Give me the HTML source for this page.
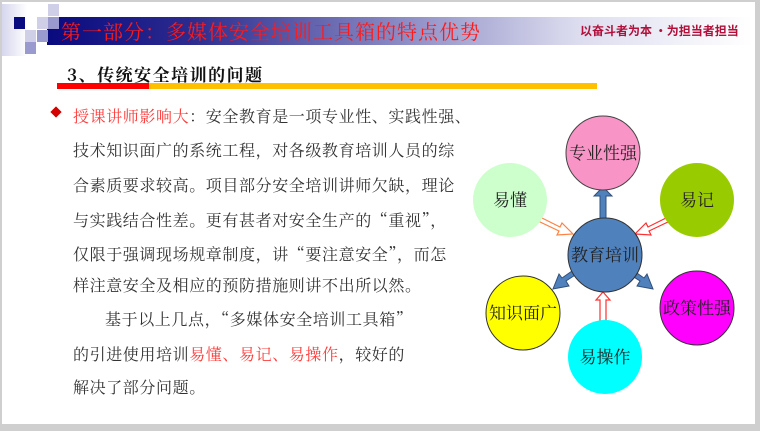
<!DOCTYPE html>
<html><head><meta charset="utf-8"><style>
*{margin:0;padding:0}
body{width:760px;height:431px;background:#cfcfcf;position:relative;overflow:hidden;font-family:"Noto Serif CJK SC","Liberation Serif",serif}
#slide{position:absolute;left:2px;top:2px;width:753px;height:422px;background:#fff;overflow:hidden}
.a{position:absolute}
.sq{position:absolute;width:11px;height:12px}
.body{position:absolute;left:71px;font-size:16px;line-height:20px;color:#333;white-space:nowrap;letter-spacing:0.6px}
.red{color:#ff3b3b}
</style></head><body>
<div id="slide">
<div class="a" style="left:0;top:2px;width:25px;height:52px;background:linear-gradient(90deg,#d6d6ee,#fff)"></div>
<div class="a" style="left:45px;top:15px;width:705px;height:28px;background:linear-gradient(90deg,#0a0a80 0%,#2a2a8e 20%,#8a8ac4 50%,#dcdcef 75%,#fff 100%)"></div>
<div class="sq" style="left:12px;top:15px;background:#0a0a80"></div>
<div class="sq" style="left:46px;top:2px;background:#cfcfe8"></div>
<div class="sq" style="left:35px;top:15px;background:#cfcfe8"></div>
<div class="sq" style="left:46px;top:15px;background:#9a9acf"></div>
<div class="sq" style="left:23px;top:28px;background:#cfcfe8"></div>
<div class="sq" style="left:35px;top:28px;background:#9a9acf"></div>
<div class="sq" style="left:23px;top:40px;background:#9a9acf"></div>
<div class="a" style="left:59px;top:16px;font-size:20px;line-height:26px;letter-spacing:1px;color:#ff1a1a;white-space:nowrap">第一部分：多媒体安全培训工具箱的特点优势</div>
<div class="a" style="left:578px;top:21px;font-size:12px;line-height:16px;font-weight:bold;color:#b0103a;font-family:'Noto Sans CJK SC','Liberation Sans',sans-serif;white-space:nowrap">以奋斗者为本 •为担当者担当</div>
<div class="a" style="left:65px;top:61px;font-size:17px;line-height:22px;letter-spacing:1.5px;font-weight:bold;color:#111;white-space:nowrap">3、传统安全培训的问题</div>
<div class="a" style="left:55px;top:81px;width:92px;height:6px;background:#ff0000"></div>
<div class="a" style="left:147px;top:81px;width:448px;height:6px;background:#ffc000"></div>
<div class="a" style="left:50px;top:106px;width:8px;height:8px;background:#d40000;transform:rotate(45deg)"></div>
<div class="body" style="top:104px"><span class="red">授课讲师影响大</span>：安全教育是一项专业性、实践性强、</div>
<div class="body" style="top:138px">技术知识面广的系统工程，对各级教育培训人员的综</div>
<div class="body" style="top:173px">合素质要求较高。项目部分安全培训讲师欠缺，理论</div>
<div class="body" style="top:208px">与实践结合性差。更有甚者对安全生产的“重视”，</div>
<div class="body" style="top:242px">仅限于强调现场规章制度，讲“要注意安全”，而怎</div>
<div class="body" style="top:273px">样注意安全及相应的预防措施则讲不出所以然。</div>
<div class="body" style="top:307px;left:103px">基于以上几点，“多媒体安全培训工具箱”</div>
<div class="body" style="top:342px">的引进使用培训<span class="red">易懂、易记、易操作</span>，较好的</div>
<div class="body" style="top:375px">解决了部分问题。</div>
<svg class="a" style="left:-2px;top:-2px" width="760" height="431" font-family="Noto Serif CJK SC, Liberation Serif, serif" font-size="16">
<g fill="#4f81bd" stroke="#2f4f7a" stroke-width="1">
<polygon points="600,222 600,196 594,196 603,187 612,196 606,196 606,222"/>
<polygon points="586,268 566,281 569,286 553,289 559,274 562,278 582,264"/>
<polygon points="624,264 644,278 647,274 653,289 637,286 640,281 620,268"/>
</g>
<g fill="none" stroke-width="1.2">
<polygon stroke="#ff8040" points="540,217 560,227 562,223 573,234 557,235 559,231 538,221"/>
<polygon stroke="#ff3030" points="668,217 648,227 646,223 635,234 651,235 649,231 670,221"/>
<polygon stroke="#ff3030" points="600,322 600,300 596,300 603,292 610,300 606,300 606,322"/>
</g>
<circle cx="603" cy="153" r="37" fill="#f894c6" stroke="#444"/>
<circle cx="510" cy="200" r="37" fill="#ccffcc"/>
<circle cx="697" cy="200" r="37" fill="#99cc00"/>
<circle cx="605" cy="255" r="37" fill="#4f81bd" stroke="#333"/>
<circle cx="523" cy="313" r="37" fill="#ffff00" stroke="#333"/>
<circle cx="605" cy="357" r="37" fill="#00ffff"/>
<circle cx="697" cy="308" r="37" fill="#ff00ff" stroke="#333"/>
<g fill="#222" text-anchor="middle" font-size="17">
<text x="603" y="159">专业性强</text>
<text x="510" y="206">易懂</text>
<text x="697" y="206">易记</text>
<text x="605" y="261">教育培训</text>
<text x="523" y="319">知识面广</text>
<text x="605" y="363">易操作</text>
<text x="697" y="314">政策性强</text>
</g>
</svg>
</div>
</body></html>
